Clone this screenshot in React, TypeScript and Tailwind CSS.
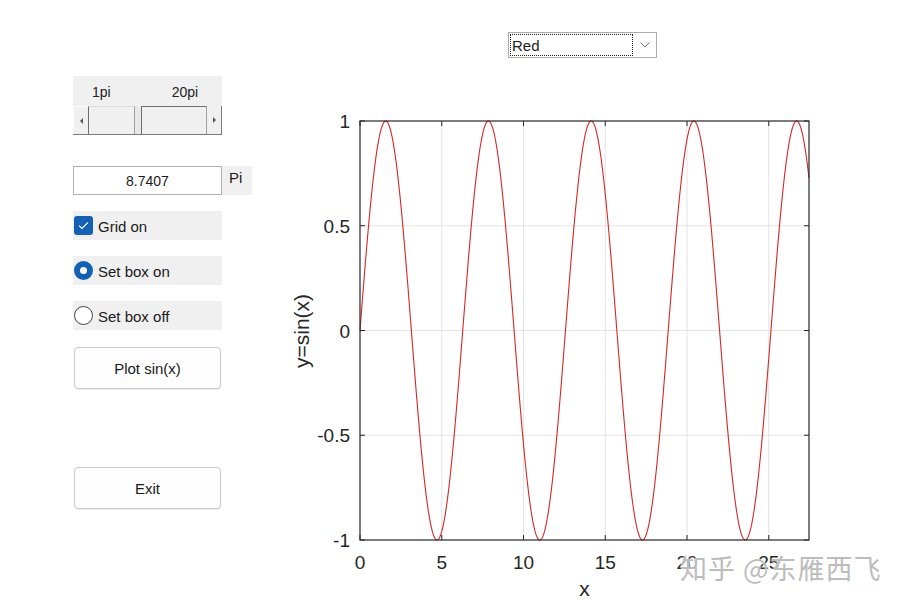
import React from "react";

const X_MAX = 8.7407 * Math.PI;

// plot box in svg coordinates (svg origin sits at page x=253, y=60)
const LEFT = 107;
const TOP = 61;
const WIDTH = 449;
const HEIGHT = 419;

function toX(value: number) {
  return LEFT + (value / X_MAX) * WIDTH;
}

function toY(value: number) {
  return TOP + ((1 - value) / 2) * HEIGHT;
}

function buildSinePath() {
  const steps = 900;
  const points: string[] = [];

  for (let i = 0; i <= steps; i++) {
    const x = (i / steps) * X_MAX;
    points.push(`${toX(x).toFixed(2)},${toY(Math.sin(x)).toFixed(2)}`);
  }

  return `M${points.join("L")}`;
}

const xTicks = [0, 5, 10, 15, 20, 25];
const yTicks = [1, 0.5, 0, -0.5, -1];

function SinePlot() {
  const sinePath = buildSinePath();
  const bottom = TOP + HEIGHT;
  const right = LEFT + WIDTH;

  return (
    <svg width={647} height={540} className="block" style={{ fontFamily: "'Liberation Sans', Arial, sans-serif" }}>
      {xTicks.slice(1).map((tick) => (
        <line key={`gx${tick}`} x1={toX(tick)} x2={toX(tick)} y1={TOP} y2={bottom} stroke="#e3e3e3" strokeWidth={1} />
      ))}
      {yTicks.slice(1, -1).map((tick) => (
        <line key={`gy${tick}`} x1={LEFT} x2={right} y1={toY(tick)} y2={toY(tick)} stroke="#e3e3e3" strokeWidth={1} />
      ))}

      <path d={sinePath} fill="none" stroke="#d62728" strokeWidth={1.1} />

      {xTicks.map((tick) => (
        <g key={`tx${tick}`}>
          <line x1={toX(tick)} x2={toX(tick)} y1={bottom} y2={bottom - 5} stroke="#262626" />
          <line x1={toX(tick)} x2={toX(tick)} y1={TOP} y2={TOP + 5} stroke="#262626" />
        </g>
      ))}
      {yTicks.map((tick) => (
        <g key={`ty${tick}`}>
          <line x1={LEFT} x2={LEFT + 5} y1={toY(tick)} y2={toY(tick)} stroke="#262626" />
          <line x1={right} x2={right - 5} y1={toY(tick)} y2={toY(tick)} stroke="#262626" />
        </g>
      ))}

      <rect x={LEFT} y={TOP} width={WIDTH} height={HEIGHT} fill="none" stroke="#262626" strokeWidth={1.2} />

      {xTicks.map((tick) => (
        <text key={`lx${tick}`} x={toX(tick)} y={bottom + 29} textAnchor="middle" fontSize={19} fill="#262626">
          {tick}
        </text>
      ))}
      {yTicks.map((tick) => (
        <text key={`ly${tick}`} x={LEFT - 10} y={toY(tick) + 7} textAnchor="end" fontSize={19} fill="#262626">
          {tick}
        </text>
      ))}

      <text x={LEFT + WIDTH / 2} y={536} textAnchor="middle" fontSize={21} fill="#262626">
        x
      </text>
      <text
        x={0}
        y={0}
        transform="translate(56 271) rotate(-90)"
        textAnchor="middle"
        fontSize={21}
        fill="#262626"
      >
        y=sin(x)
      </text>
    </svg>
  );
}

function ScrollSlider() {
  return (
    <div className="w-[149px] h-[59px] bg-[#f0f0f0] flex flex-col">
      <div className="h-[30px] flex items-center pt-[2px] text-[14px] text-[#222]">
        <span className="ml-[19px]">1pi</span>
        <span className="ml-[61px]">20pi</span>
      </div>
      <div className="h-[29px] flex border-b border-[#7a7a7a]">
        <div className="w-[15px] flex items-center justify-center border-l border-t border-[#fcfcfc]">
          <span className="w-0 h-0 border-y-[3px] border-y-transparent border-r-[3px] border-r-[#555]" />
        </div>
        <div className="w-[47px] border-l border-[#6e6e6e] border-t border-t-[#dadada] border-r border-r-[#a0a0a0]" />
        <div className="w-[6px] bg-[#e9e9e9]" />
        <div className="w-[66px] border-l border-[#6e6e6e] border-t border-t-[#6e6e6e] border-r border-r-[#a0a0a0]" />
        <div className="w-[15px] flex items-center justify-center border-r border-[#7a7a7a]">
          <span className="w-0 h-0 border-y-[3px] border-y-transparent border-l-[3px] border-l-[#555]" />
        </div>
      </div>
    </div>
  );
}

function CheckIcon() {
  return (
    <svg width="11" height="9" viewBox="0 0 11 9">
      <path d="M1 4.6 L4 7.4 L10 1.3" fill="none" stroke="white" strokeWidth="1.2" />
    </svg>
  );
}

export default function App() {
  return (
    <div
      className="w-[900px] h-[600px] bg-white flex relative overflow-hidden text-[#1a1a1a]"
      style={{ fontFamily: "'Liberation Sans', Arial, sans-serif" }}
    >
      <div className="ml-[73px] w-[180px] flex flex-col pt-[76px]">
        <ScrollSlider />

        <div className="mt-[31px] flex h-[29px]">
          <div className="w-[149px] border border-[#b0b0b0] bg-white flex items-center justify-center pt-[2px] text-[14px]">
            8.7407
          </div>
          <div className="w-[30px] bg-[#f0f0f0] pl-[7px] pt-[1px] text-[15px]">Pi</div>
        </div>

        <div className="mt-[16px] w-[149px] h-[29px] bg-[#f0f0f0] flex items-center gap-[5px] pl-[1px] text-[15px]">
          <span className="w-[19px] h-[19px] rounded-[3px] bg-[#1360b5] flex items-center justify-center">
            <CheckIcon />
          </span>
          <span className="pt-[3px]">Grid on</span>
        </div>

        <div className="mt-[16px] w-[149px] h-[29px] bg-[#f0f0f0] flex items-center gap-[5px] pl-[1px] text-[15px]">
          <span className="w-[19px] h-[19px] rounded-full border-[6px] border-[#1360b5] bg-white" />
          <span className="pt-[3px]">Set box on</span>
        </div>

        <div className="mt-[16px] w-[149px] h-[29px] bg-[#f0f0f0] flex items-center gap-[5px] pl-[1px] text-[15px]">
          <span className="w-[19px] h-[19px] rounded-full border border-[#444] bg-white" />
          <span className="pt-[3px]">Set box off</span>
        </div>

        <button
          type="button"
          className="mt-[17px] ml-[1px] w-[147px] h-[42px] rounded-[4px] border border-[#cbcbcb] bg-[#fdfdfd] pt-[2px] text-[15px] shadow-[0_1px_1px_rgba(0,0,0,0.08)]"
        >
          Plot sin(x)
        </button>

        <button
          type="button"
          className="mt-[78px] ml-[1px] w-[147px] h-[42px] rounded-[4px] border border-[#cbcbcb] bg-[#fdfdfd] pt-[2px] text-[15px] shadow-[0_1px_1px_rgba(0,0,0,0.08)]"
        >
          Exit
        </button>
      </div>

      <div className="flex-1 flex flex-col">
        <div className="mt-[32px] ml-[255px] w-[149px] h-[26px] border border-[#acacac] bg-white flex">
          <div className="flex-1 m-[1px] border border-dotted border-[#222] flex items-center pl-[1px] pt-[2px] text-[15px]">
            Red
          </div>
          <div className="w-[22px] flex items-center justify-center">
            <svg width="10" height="6" viewBox="0 0 10 6">
              <path d="M0.5 0.5 L5 5 L9.5 0.5" fill="none" stroke="#707070" strokeWidth="1" />
            </svg>
          </div>
        </div>
        <div className="mt-[2px]">
          <SinePlot />
        </div>
      </div>

      <div
        className="absolute left-[680px] top-[548px] text-[27px] text-[#bcbcbc] tracking-[1px] [text-shadow:0_0_2px_#fff]"
        style={{ fontFamily: "'Noto Sans CJK SC', sans-serif" }}
      >
        知乎 @东雁西飞
      </div>
    </div>
  );
}
